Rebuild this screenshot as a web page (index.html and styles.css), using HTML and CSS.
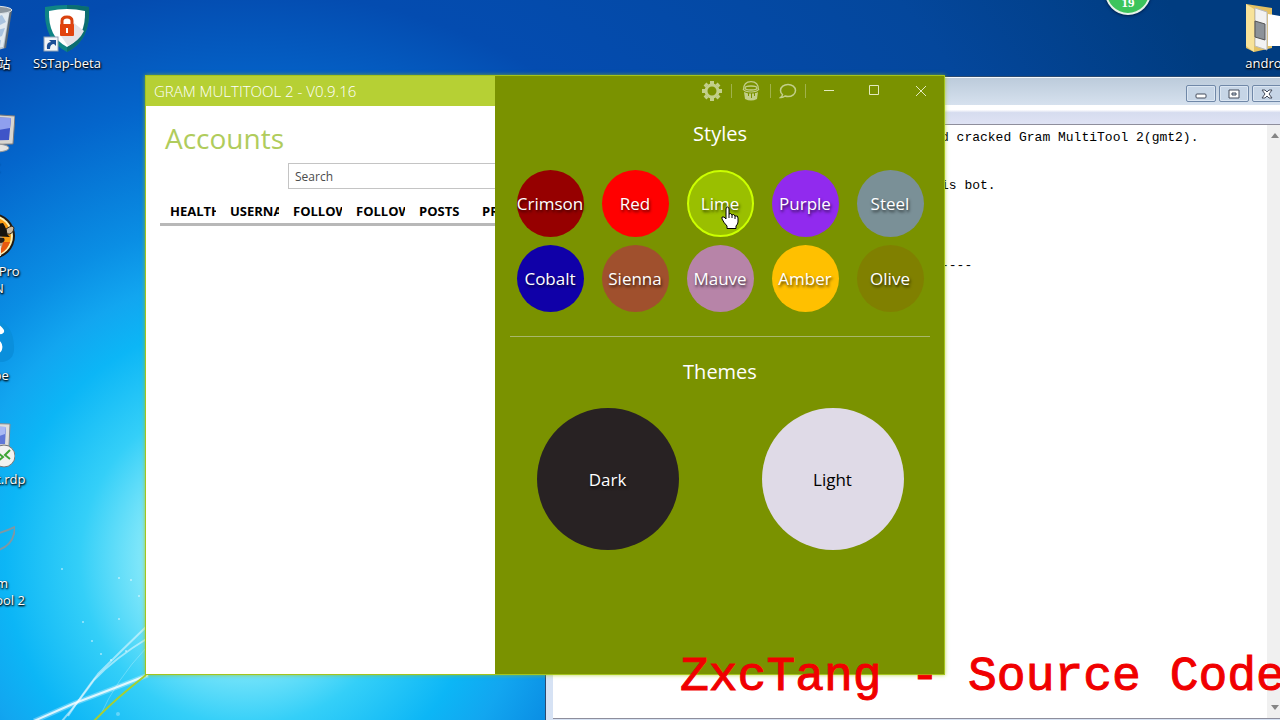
FILE: index.html
```html
<!DOCTYPE html>
<html lang="en">
<head>
    <meta charset="UTF-8">
    <meta name="viewport" content="width=device-width, initial-scale=1.0">
    <title>Gram Multitool 2</title>
    <link rel="stylesheet" href="styles.css">
</head>
<body>

<div class="desktop">

    <!-- light beams of the wallpaper -->
    <svg class="beams" width="300" height="180" viewBox="0 540 300 180" fill="none">
        <path d="M34 721 L75 703 Q110 690 148 675" stroke="#fff" stroke-opacity=".3" stroke-width="5"/>
        <path d="M34 721 L75 703 Q110 690 148 675" stroke="#fff" stroke-opacity=".8" stroke-width="2"/>
        <path d="M62 721 Q80 700 94 680 Q115 658 148 638" stroke="#fff" stroke-opacity=".5" stroke-width="2"/>
        <path d="M68 716 Q84 692 98 674 Q122 650 148 625" stroke="#fff" stroke-opacity=".5" stroke-width="2"/>
        <path d="M100 716 Q116 680 146 648" stroke="#fff" stroke-opacity=".25"/>
        <path d="M94 721 Q114 700 146 675" stroke="#a6cf30" stroke-width="2"/>
        <g fill="#fff" fill-opacity=".55">
            <circle cx="62" cy="569" r="1"/><circle cx="119" cy="578" r="1"/><circle cx="131" cy="580" r="1"/>
            <circle cx="139" cy="596" r="1"/><circle cx="83" cy="622" r="1"/><circle cx="119" cy="619" r="1"/>
            <circle cx="101" cy="654" r="1"/><circle cx="92" cy="641" r="1"/><circle cx="126" cy="651" r="1"/>
            <circle cx="111" cy="660" r="1"/><circle cx="118" cy="714" r="2" fill-opacity=".3"/>
        </g>
    </svg>

    <div class="icons">
        <div class="icon">
            <svg width="48" height="48" viewBox="0 0 48 48">
                <path d="M5 6 L44 6 L38 44 Q24 49 11 44 Z" fill="#b9c3cb"/>
                <path d="M22 10 L42 9 L36 43 L22 45 Z" fill="#e2eaf0"/>
                <path d="M28 14 L35 11 L39 18 L33 21 Z M30 26 L38 24 L35 32 L29 34 Z M27 38 L34 36 L33 42 L27 43 Z" fill="#a9c3df"/>
                <path d="M44 6 L38 44" stroke="#5f6b75" stroke-width="2"/>
                <ellipse cx="25" cy="6" rx="20" ry="4" fill="#8d979f" stroke="#dfe5ea"/>
            </svg>
            <span>回收站</span>
        </div>
        <div class="icon">
            <svg width="48" height="48" viewBox="0 0 48 48">
                <path d="M2 5 L48 8 L46 36 L2 37 Z" fill="#d8d6d0" stroke="#77777a"/>
                <path d="M5 8 L44 10 L42 32 L5 33 Z" fill="#3f55c8"/>
                <path d="M20 9 L44 10 L43 20 L20 24 Z" fill="#8f9fee"/>
                <ellipse cx="29" cy="40" rx="13" ry="4" fill="#e4e4e2" stroke="#999"/>
            </svg>
            <span>PC</span>
        </div>
        <div class="icon">
            <svg width="48" height="48" viewBox="0 0 48 48">
                <circle cx="25" cy="24" r="23" fill="#241a10"/>
                <circle cx="25" cy="24" r="21" fill="#fff0b0"/>
                <circle cx="25" cy="24" r="19" fill="#f99a12"/>
                <path d="M20 43 A19 19 0 0 0 43 30 L30 30 Z" fill="#e8590e"/>
                <path d="M27 22 Q37 21 36 30 Q35 40 26 42 Z" fill="#b9a48a"/>
                <path d="M39 17 Q46 12 47 16 Q46 23 40 22 Z" fill="#c9b79c" stroke="#33261a"/>
                <path d="M24 13 L36 11 Q40 17 40 22 L43 25 L24 24 Z" fill="#17130f"/>
                <path d="M26 25 L37 26 Q39 30 34 31 L28 30 Z" fill="#221d18"/>
                <path d="M27 34 h7 v10 h-7 Z" fill="#eee8da"/>
            </svg>
            <span>HMA! Pro VPN</span>
        </div>
        <div class="icon">
            <svg width="48" height="48" viewBox="0 0 48 48">
                <path d="M4 4 H28 Q46 7 47 30 Q48 44 36 46 H4 Z" fill="#0a8fdc"/>
                <path d="M34 15 Q30 9 24 10 Q16 11 17 18 Q18 23 26 25 Q34 27 32 33 Q28 39 20 36" fill="none" stroke="#fff" stroke-width="6" stroke-linecap="round"/>
            </svg>
            <span>Skype</span>
        </div>
        <div class="icon">
            <svg width="48" height="48" viewBox="0 0 48 48">
                <path d="M2 3 L43 4 L42 26 L2 28 Z" fill="#dedede" stroke="#8a8a8a"/>
                <path d="M5 6 L39 7 L38 24 L5 25 Z" fill="#6078d8"/>
                <path d="M20 6 L39 7 L38 14 L20 20 Z" fill="#a9b9f4"/>
                <circle cx="37" cy="36" r="11" fill="#f2f2f0" stroke="#777"/>
                <path d="M30 32 l6 5 l-6 5 M43 30 l-5 5 l5 4" fill="none" stroke="#3da535" stroke-width="2"/>
            </svg>
            <span>Default.rdp</span>
        </div>
        <div class="icon">
            <svg width="48" height="48" viewBox="0 0 48 48">
                <path d="M2 14 Q30 12 48 3 Q47 24 26 27" fill="none" stroke="#7f98a4" stroke-width="2"/>
            </svg>
            <span>Gram MultiTool 2</span>
        </div>
        <div class="icon">
            <svg width="48" height="48" viewBox="0 0 48 48">
                <path d="M24 1 Q35 1 46 3 Q48 36 24 48 Q0 36 2 3 Q13 1 24 1 Z" fill="#0f8585"/>
                <path d="M24 1 Q35 1 46 3 Q48 36 24 48 Z" fill="#0b6d70"/>
                <path d="M24 5 Q33 5 42 7 Q43 33 24 43 Q5 33 6 7 Q15 5 24 5 Z" fill="#fff"/>
                <path d="M31 19 L41 27 Q36 37 25 42 L18 32 Z" fill="#e3e3e8"/>
                <path d="M19 21 V17 Q19 13 24 13 Q29 13 29 17 V21" fill="none" stroke="#d9420f" stroke-width="3"/>
                <rect x="17" y="20" width="14" height="12" rx="1" fill="#e1440f"/>
                <path d="M23 24 h2 v5 h-2 Z" fill="#fff"/>
                <rect x="1" y="33" width="14" height="14" fill="#f2f5f8" stroke="#8fa1b5"/>
                <path d="M4 45 Q3 38 8 38 L6 36 H13 V42 L11 40 Q7 40 7 45 Z" fill="#1c4f96"/>
            </svg>
            <span>SSTap-beta</span>
        </div>
    </div>

    <div class="icon folder">
        <svg width="48" height="48" viewBox="0 0 48 48">
            <path d="M1 0 L27 4 V44 L9 48 L1 44 Z" fill="#e3c163"/>
            <path d="M10 4 L22 8 V46 L10 42 Z" fill="#f2f2f2" stroke="#bbb"/>
            <path d="M10 17 L20 20 V36 L10 33 Z" fill="#8c9299" stroke="#555"/>
            <path d="M23 10 L48 14 V42 L23 42 Z" fill="#fff"/>
            <path d="M1 0 L9 5 V48 L1 42 Z" fill="#f8e39a"/>
        </svg>
        <span>android</span>
    </div>

    <div class="counter">19</div>

    <div class="notepad">
        <div class="notepad-title">
            <button type="button" aria-label="Minimize">
                <svg width="12" height="10" viewBox="0 0 12 10"><rect x="1" y="5" width="10" height="4" rx="1" fill="#fff" stroke="#444c5c"/></svg>
            </button>
            <button type="button" aria-label="Restore">
                <svg width="12" height="10" viewBox="0 0 12 10"><path d="M1 1 H11 V9 H1 Z M4 4 H8 V6 H4 Z" fill="#fff" fill-rule="evenodd" stroke="#444c5c"/></svg>
            </button>
            <button type="button" aria-label="Close">
                <svg width="12" height="10" viewBox="0 0 12 10"><path d="M1 1 H4 L6 3 L8 1 H11 L8 5 L11 9 H8 L6 7 L4 9 H1 L4 5 Z" fill="#fff" stroke="#444c5c"/></svg>
            </button>
        </div>
        <div class="notepad-menu"></div>
        <div class="notepad-body">
            <textarea aria-label="Note" spellcheck="false">d cracked Gram MultiTool 2(gmt2).


is bot.




----</textarea>
            <div class="scrollbar">
                <svg width="8" height="5" viewBox="0 0 8 5"><path d="M0 5 L4 0 L8 5 Z" fill="#858585"/></svg>
                <svg width="8" height="5" viewBox="0 0 8 5"><path d="M0 0 L4 5 L8 0 Z" fill="#858585"/></svg>
            </div>
        </div>
    </div>

    <div class="app">
        <div class="app-title">GRAM MULTITOOL 2 - V0.9.16</div>

        <div class="accounts">
            <h1>Accounts</h1>
            <input class="search" type="text" placeholder="Search" aria-label="Search">
            <table>
                <thead>
                    <tr>
                        <th>HEALTH</th>
                        <th>USERNA</th>
                        <th>FOLLOW</th>
                        <th>FOLLOW</th>
                        <th>POSTS</th>
                        <th>PR</th>
                    </tr>
                </thead>
            </table>
        </div>

        <div class="flyout">
            <h2>Styles</h2>
            <div class="swatches">
                <button type="button" class="swatch crimson">Crimson</button>
                <button type="button" class="swatch red">Red</button>
                <button type="button" class="swatch lime">Lime</button>
                <button type="button" class="swatch purple">Purple</button>
                <button type="button" class="swatch steel">Steel</button>
                <button type="button" class="swatch cobalt">Cobalt</button>
                <button type="button" class="swatch sienna">Sienna</button>
                <button type="button" class="swatch mauve">Mauve</button>
                <button type="button" class="swatch amber">Amber</button>
                <button type="button" class="swatch olive">Olive</button>
            </div>
            <hr>
            <h2>Themes</h2>
            <div class="themes">
                <button type="button" class="swatch theme dark">Dark</button>
                <button type="button" class="swatch theme light">Light</button>
            </div>
        </div>

        <div class="commands">
            <button type="button" class="command" aria-label="Settings">
                <svg width="20" height="20" viewBox="0 0 20 20">
                    <circle cx="10" cy="10" r="6" fill="none" stroke="#c3cf8a" stroke-width="3"/>
                    <path d="M10 0 V3 M10 17 V20 M0 10 H3 M17 10 H20 M3 3 L5 5 M15 15 L17 17 M17 3 L15 5 M5 15 L3 17" stroke="#c3cf8a" stroke-width="4"/>
                </svg>
            </button>
            <button type="button" class="command" aria-label="Styles">
                <svg width="18" height="20" viewBox="0 0 18 20" fill="none" stroke="#c3cf8a">
                    <path d="M1.500 9 Q1.500 0.700 9 0.700 Q16.500 0.700 16.500 9" stroke-width="1.2"/>
                    <ellipse cx="9" cy="7" rx="6" ry="2" stroke-width="1.3"/>
                    <path d="M1 8 Q3 11 9 11 Q15 11 17 8" stroke-width="1.2"/>
                    <path d="M2 11 Q4 12 6 12.400 V15 H7 V12.500 H9 V17 H10 V12.500 H12 V15 H13 V12 Q15 12 16 11 L15 18 Q9 21 3 18 Z" fill="#c3cf8a" stroke="none"/>
                </svg>
            </button>
            <button type="button" class="command feedback" aria-label="Feedback">
                <svg width="18" height="16" viewBox="0 0 18 16">
                    <path d="M9 1.500 C13 1.500 16.500 4 16.500 7.500 C16.500 11 13 13.500 9 13.500 C8 13.500 7 13.300 6 13 Q4 14.700 1.500 14.500 Q3.500 13 3.500 11.500 C2 10.500 1.500 9 1.500 7.500 C1.500 4 5 1.500 9 1.500 Z" fill="none" stroke="#c3cf8a" stroke-width="1.5"/>
                </svg>
            </button>
            <button type="button" class="caption" aria-label="Minimize">
                <svg width="12" height="12" viewBox="0 0 12 12"><path d="M1 5.500 H11" stroke="#e3eabf"/></svg>
            </button>
            <button type="button" class="caption" aria-label="Maximize">
                <svg width="12" height="12" viewBox="0 0 12 12"><path d="M0.500 0.500 H9.500 V9.500 H0.500 Z" fill="none" stroke="#e3eabf"/></svg>
            </button>
            <button type="button" class="caption" aria-label="Close">
                <svg width="12" height="12" viewBox="0 0 12 12"><path d="M1 1 L11 11 M11 1 L1 11" stroke="#e3eabf"/></svg>
            </button>
        </div>
    </div>

    <div class="watermark">ZxcTang - Source Code</div>

    <svg class="cursor" width="18" height="24" viewBox="0 0 18 24">
        <path d="M5 13 V3 Q5 1 6.500 1 Q8 1 8 3 V8 Q10 6.500 11 9 Q13 7.500 14 10 Q17 9 17 12 V16 Q17 18 15 20 V22.500 H6 V20 Q3 17 1 13 Q0 10 3 11 Z" fill="#fff" stroke="#000"/>
        <path d="M8 8 V12 M11 9 V12 M14 10 V13" stroke="#000"/>
    </svg>
</div>

</body>
</html>
```
FILE: styles.css
```css
body {
    margin: 0;
    font-family: "Open Sans", "Noto Sans CJK SC", sans-serif;
}

button {
    margin: 0;
    padding: 0;
    border: none;
    background: none;
    font-family: inherit;
}

.desktop {
    position: relative;
    height: 100vh;
    overflow: hidden;
    background: radial-gradient(circle at 245px 560px, #a0f0fa 0, #84e8fa 100px, #34cff8 165px, #0cb6f6 240px, #12a6f0 285px, #0a8ee4 340px, #0466cc 460px, #044cb0 570px, #04479c 860px, #003c80 1080px);
}

.beams {
    position: absolute;
    left: 0;
    bottom: 0;
}

/* desktop icons */
.icons {
    position: absolute;
    left: -47px;
    top: 4px;
    display: grid;
    grid-auto-flow: column;
    grid-template-rows: repeat(6, 104px);
    grid-auto-columns: 76px;
}

.icon {
    display: flex;
    flex-direction: column;
    align-items: center;
    gap: 3px;
    color: #fff;
    font-size: 13px;
    line-height: 17px;
    text-align: center;
    text-shadow: 1px 1px 2px #000, 0 1px 2px #000;
}

.folder {
    position: absolute;
    left: 1245px;
    top: 4px;
}

.counter {
    position: absolute;
    left: 1105px;
    top: -31px;
    box-sizing: border-box;
    width: 46px;
    height: 46px;
    padding-top: 24px;
    border: 2px solid #e6f3ea;
    border-radius: 50%;
    background: #3cc45c;
    box-shadow: 0 1px 3px #001c48;
    color: #fff;
    font: bold 13px/16px "Liberation Serif", serif;
    text-align: center;
}

/* notepad window */
.notepad {
    position: absolute;
    left: 545px;
    top: 76px;
    right: -9px;
    bottom: -7px;
    display: flex;
    flex-direction: column;
    box-sizing: border-box;
    padding: 0 4px 7px 7px;
    border: 1px solid #2b4a70;
    background: #d6e2f4;
}

.notepad-title {
    display: flex;
    justify-content: flex-end;
    gap: 3px;
    height: 28px;
    margin: 0 -4px 0 -7px;
    padding-right: 6px;
    border-top: 1px solid #f4f8fc;
    box-sizing: border-box;
    background: linear-gradient(#bccbdb, #d6e1ee);
}

.notepad-title button {
    display: flex;
    align-items: center;
    justify-content: center;
    box-sizing: border-box;
    width: 30px;
    height: 17px;
    margin-top: 7px;
    border: 1px solid #7088a8;
    border-radius: 2px;
    background: #c6d5e6;
    box-shadow: inset 0 0 0 1px #dbe6f2;
}

.notepad-menu {
    height: 19px;
    border-bottom: 1px solid #8e8e9c;
    background: linear-gradient(#fff 25%, #d6dcef 40%, #dfe3f4);
}

.notepad-body {
    flex: 1;
    display: flex;
    border-bottom: 1px solid #8e8e9c;
    background: #fff;
}

.notepad-body textarea {
    flex: 1;
    padding: 5px 0 0 388px;
    border: none;
    outline: none;
    resize: none;
    overflow: hidden;
    background: #fff;
    color: #000;
    font: 13px/16px "Liberation Mono", monospace;
}

.scrollbar {
    display: flex;
    flex-direction: column;
    align-items: center;
    justify-content: space-between;
    box-sizing: border-box;
    width: 17px;
    padding: 8px 1px 8px 0;
    background: #f0f0f0;
}

/* application window */
.app {
    position: absolute;
    left: 145px;
    top: 75px;
    box-sizing: border-box;
    width: 800px;
    height: 600px;
    border: 1px solid #a4c41c;
    background: #fff;
    box-shadow: 0 0 4px rgba(164, 196, 0, 0.7);
}

.app-title {
    padding-left: 8px;
    background: #b6d034;
    color: #fff;
    font-size: 15px;
    font-weight: 300;
    line-height: 30px;
}

.accounts {
    display: flex;
    flex-direction: column;
    padding: 13px 14px 0;
}

.accounts h1 {
    margin: 0 0 6px 5px;
    color: #b0cc5c;
    font-size: 28px;
    font-weight: 400;
    line-height: 38px;
}

.search {
    box-sizing: border-box;
    height: 26px;
    margin-left: 128px;
    padding: 0 6px;
    border: 1px solid #c4c4c4;
    background: #fff;
    font-family: inherit;
    font-size: 12px;
}

.search::placeholder {
    color: #4c4c4c;
    opacity: 1;
}

.accounts table {
    width: 100%;
    margin-top: 10px;
    border-spacing: 0;
    border-bottom: 3px solid #b8b8b8;
    table-layout: fixed;
}

.accounts th {
    width: 49px;
    padding: 0 0 0 10px;
    border-right: 4px solid #fff;
    overflow: hidden;
    color: #000;
    font-size: 13px;
    font-weight: 700;
    line-height: 24px;
    text-align: left;
    white-space: nowrap;
}

.accounts th:first-child {
    width: 46px;
}

.accounts th:last-child {
    width: auto;
}

/* styles and themes flyout */
.flyout {
    position: absolute;
    top: 0;
    right: 0;
    bottom: 0;
    box-sizing: border-box;
    width: 449px;
    padding: 43px 14px 0 15px;
    background: #7a9200;
}

.flyout h2 {
    margin: 0;
    color: #fff;
    font-size: 20px;
    font-weight: 400;
    line-height: 30px;
    text-align: center;
}

.swatches {
    display: grid;
    grid-template-columns: repeat(5, 67px);
    gap: 8px 18px;
    justify-content: center;
    margin-top: 21px;
}

.swatch {
    height: 67px;
    border-radius: 50%;
    color: #fff;
    font-size: 17px;
    text-shadow: 1px 2px 3px rgba(0, 0, 0, 0.7);
    cursor: pointer;
}

.crimson { background: #960000; }
.red { background: #ff0000; }
.lime { border: 2px solid #ccff00; background: #9abf00; }
.purple { background: #912aee; }
.steel { background: #7a9097; }
.cobalt { background: #1000a8; }
.sienna { background: #a0502d; }
.mauve { background: #b784a8; }
.amber { background: #ffc000; }
.olive { background: #808000; }

.flyout hr {
    height: 1px;
    margin: 24px 0 20px;
    border: none;
    background: #a8b76a;
}

.themes {
    display: grid;
    grid-template-columns: repeat(2, 225px);
    justify-content: center;
    justify-items: center;
    margin-top: 21px;
}

.theme {
    width: 142px;
    height: 142px;
}

.dark {
    background: #282223;
}

.light {
    background: #dfdae7;
    color: #000;
    text-shadow: none;
}

/* title bar buttons, above the flyout */
.commands {
    position: absolute;
    top: 0;
    right: 0;
    display: flex;
    height: 30px;
}

.command,
.caption {
    display: flex;
    align-items: center;
    justify-content: center;
}

.command {
    box-sizing: border-box;
    width: 39px;
    padding-right: 1px;
    background: linear-gradient(#a1b24c, #a1b24c) right center / 1px 14px no-repeat;
}

.feedback {
    width: 35px;
}

.caption {
    width: 46px;
}

.watermark {
    position: absolute;
    left: 680px;
    top: 647px;
    color: #f00000;
    font: 48px/60px "Liberation Mono", monospace;
    white-space: nowrap;
    -webkit-text-stroke: 1px #f00000;
}

.cursor {
    position: absolute;
    left: 721px;
    top: 206px;
}
```
